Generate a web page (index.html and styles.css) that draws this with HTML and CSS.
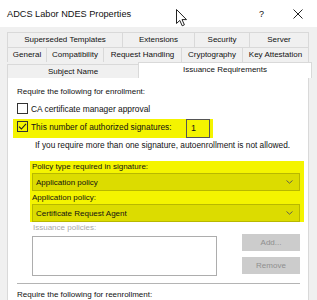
FILE: index.html
```html
<!DOCTYPE html>
<html lang="en">
<head>
    <meta charset="UTF-8">
    <title>ADCS Labor NDES Properties</title>
    <link rel="stylesheet" href="styles.css">
</head>
<body>
    <!-- title bar -->
    <div class="titlebar">
        <span class="title">ADCS Labor NDES Properties</span>
        <span class="help">?</span>
        <svg class="close" width="10" height="10" viewBox="0 0 10 10"><path d="M0.5 0.5L9.5 9.5M9.5 0.5L0.5 9.5" stroke="#222" stroke-width="1"/></svg>
        <svg class="cursor" width="12" height="18" viewBox="0 0 12 18"><path d="M0.5 0.5V14.5L3.8 11.4L6.2 16.8L8.4 15.8L6 10.6H10.5Z" fill="#fff" stroke="#222" stroke-width="1" stroke-linejoin="round"/></svg>
    </div>

    <div class="dialog">
        <!-- tab rows -->
        <div class="tabrow row1">
            <div class="tab">Superseded Templates</div>
            <div class="tab">Extensions</div>
            <div class="tab">Security</div>
            <div class="tab">Server</div>
        </div>
        <div class="tabrow row2">
            <div class="tab">General</div>
            <div class="tab">Compatibility</div>
            <div class="tab">Request Handling</div>
            <div class="tab">Cryptography</div>
            <div class="tab">Key Attestation</div>
        </div>
        <div class="tabrow row3">
            <div class="tab">Subject Name</div>
            <div class="tab active">Issuance Requirements</div>
        </div>

        <div class="panel">
            <div class="heading">Require the following for enrollment:</div>
            <label class="check">
                <span class="box"></span>
                <span>CA certificate manager approval</span>
            </label>

            <div class="hl hl-sig">
                <label class="check">
                    <span class="box">
                        <svg width="9" height="9" viewBox="0 0 9 9"><path d="M1 4.6L3.4 7L8 1.8" fill="none" stroke="#222" stroke-width="1.1"/></svg>
                    </span>
                    <span>This number of authorized signatures:</span>
                </label>
                <div class="num">1</div>
            </div>

            <div class="note">If you require more than one signature, autoenrollment is not allowed.</div>

            <div class="hl hl-policy">
                <div class="lbl">Policy type required in signature:</div>
                <div class="select">
                    <span>Application policy</span>
                    <svg width="7" height="4" viewBox="0 0 7 4"><path d="M0.5 0.5L3.5 3.2L6.5 0.5" fill="none" stroke="#555" stroke-width="0.9"/></svg>
                </div>
                <div class="lbl">Application policy:</div>
                <div class="select">
                    <span>Certificate Request Agent</span>
                    <svg width="7" height="4" viewBox="0 0 7 4"><path d="M0.5 0.5L3.5 3.2L6.5 0.5" fill="none" stroke="#555" stroke-width="0.9"/></svg>
                </div>
            </div>

            <div class="lbl disabled">Issuance policies:</div>
            <div class="policies">
                <div class="listbox"></div>
                <div class="buttons">
                    <div class="btn">Add...</div>
                    <div class="btn">Remove</div>
                </div>
            </div>

            <div class="sep"></div>
            <div class="heading">Require the following for reenrollment:</div>
        </div>
    </div>
</body>
</html>
```

FILE: styles.css
```css
*{
    margin: 0;
    padding: 0;
    box-sizing: border-box;
}
body{
    width: 317px;
    height: 300px;
    overflow: hidden;
    background-color: #f0f0f0;
    font-family: "Liberation Sans", Arial, sans-serif;
    font-size: 8px;
    color: #111;
}
.titlebar{
    position: relative;
    height: 27px;
    background-color: #fff;
    display: flex;
    align-items: center;
    padding-left: 7px;
}
.title{
    font-size: 9.2px;
    color: #111;
    flex: 1;
}
.help{
    font-size: 9px;
    width: 10px;
    margin-right: 24px;
}
.close{
    margin-right: 14px;
}
.cursor{
    position: absolute;
    left: 176px;
    top: 9px;
}
.dialog{
    padding: 5px 8px 0 7px;
}
.tabrow{
    display: grid;
    height: 15px;
}
.row1{
    grid-template-columns: 116px 72px 55px 59px;
}
.row2{
    grid-template-columns: 40px 57px 78px 61px 66px;
}
.row3{
    grid-template-columns: 132px 170px;
    height: 14px;
    align-items: end;
}
.tab{
    height: 15px;
    border: 1px solid #d9d9d9;
    border-bottom: none;
    margin-left: -1px;
    background-color: #f0f0f0;
    text-align: center;
    line-height: 14px;
    white-space: nowrap;
    overflow: hidden;
}
.tab:first-child{
    margin-left: 0;
}
.row3 .tab{
    height: 14px;
    line-height: 13px;
}
.row3 .tab.active{
    height: 16px;
    line-height: 14px;
    background-color: #fff;
    margin-right: -3px;
    position: relative;
    z-index: 1;
}
.panel{
    height: 224px;
    background-color: #fff;
    border-left: 1px solid #d9d9d9;
    border-right: 1px solid #d9d9d9;
    padding: 11px 8px 0 9px;
    display: flex;
    flex-direction: column;
}
.heading{
    line-height: 10px;
}
.check{
    display: flex;
    align-items: center;
    gap: 3px;
    margin-top: 6px;
    height: 12px;
    font-size: 8.4px;
}
.box{
    width: 11px;
    height: 11px;
    border: 1px solid #333;
    background-color: #fff;
    display: flex;
    align-items: center;
    justify-content: center;
}
.hl{
    background-color: #f4f400;
}
.hl-sig{
    margin: 5px 0 0 -4px;
    width: 200px;
    height: 25px;
    display: flex;
    align-items: center;
    justify-content: space-between;
    padding: 0 3px 0 4px;
}
.hl-sig .check{
    margin-top: -4px;
}
.hl-sig .box{
    background-color: #f4f400;
}
.num{
    width: 24px;
    height: 19px;
    border: 1px solid #555;
    padding: 3px 0 0 4px;
    font-size: 9px;
}
.note{
    margin: 2px 0 0 18px;
    line-height: 10px;
    font-size: 8.3px;
}
.hl-policy{
    margin: 11px 0 0 13px;
    width: 274px;
    height: 61px;
    padding: 1px 4px 2px 2px;
}
.lbl{
    line-height: 10px;
}
.select{
    height: 18px;
    margin: 1px 0 2px;
    background-color: #dcdc00;
    border: 1px solid #b8b800;
    display: flex;
    align-items: center;
    justify-content: space-between;
    padding: 0 6px 0 3px;
}
.lbl.disabled{
    color: #a8a8a8;
    margin: 1px 0 0 16px;
}
.policies{
    display: flex;
    margin: 3px 0 0 15px;
}
.listbox{
    width: 185px;
    height: 40px;
    border: 1px solid #adadad;
}
.buttons{
    margin-left: 25px;
    margin-top: -2px;
    display: flex;
    flex-direction: column;
    gap: 6px;
}
.btn{
    width: 58px;
    height: 17px;
    background-color: #cccccc;
    color: #8f8f8f;
    text-align: center;
    line-height: 17px;
}
.sep{
    margin-top: 7px;
    height: 1px;
    background-color: #b4b4b4;
}
.heading:last-child{
    margin-top: 6px;
}
```
